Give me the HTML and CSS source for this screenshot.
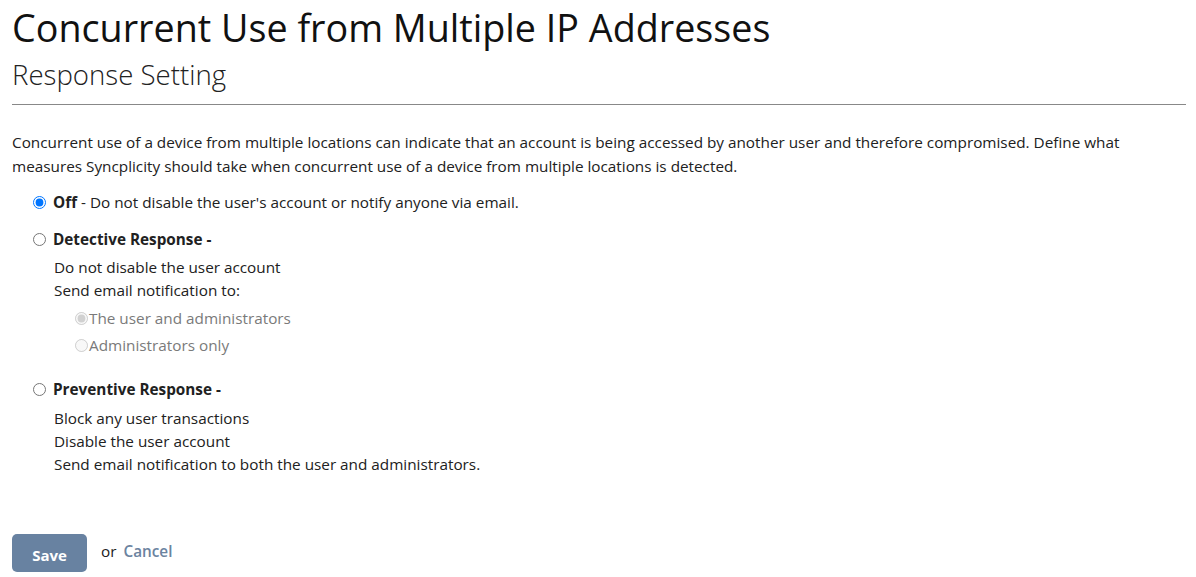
FILE: index.html
```html
<!DOCTYPE html>
<html><head>
<meta charset="utf-8">
<title>Concurrent Use from Multiple IP Addresses</title>
<link rel="stylesheet" href="styles.css">
</head>
<body>
<div class="page">
	<h1>Concurrent Use from Multiple IP Addresses</h1>
	<h2>Response Setting</h2>
	<hr>
	<p class="intro">Concurrent use of a device from multiple locations can indicate that an account is being accessed by another user and therefore compromised. Define what measures Syncplicity should take when concurrent use of a device from multiple locations is detected.</p>

	<div class="options">
		<label class="opt">
			<input type="radio" name="response" value="off" checked>
			<span><b>Off</b> - Do not disable the user's account or notify anyone via email.</span>
		</label>

		<label class="opt">
			<input type="radio" name="response" value="detective">
			<span><b>Detective Response -</b></span>
		</label>
		<div class="details">
			<div>Do not disable the user account</div>
			<div>Send email notification to:</div>
			<div class="sub">
				<label class="subopt"><input type="radio" name="notify" checked disabled>The user and administrators</label>
				<label class="subopt"><input type="radio" name="notify" disabled>Administrators only</label>
			</div>
		</div>

		<label class="opt">
			<input type="radio" name="response" value="preventive">
			<span><b>Preventive Response -</b></span>
		</label>
		<div class="details">
			<div>Block any user transactions</div>
			<div>Disable the user account</div>
			<div>Send email notification to both the user and administrators.</div>
		</div>
	</div>

	<div class="actions">
		<button class="save">Save</button>
		<span class="or">or</span>
		<a href="#" class="cancel">Cancel</a>
	</div>
</div>
</body>
</html>
```

FILE: styles.css
```css
body {
	margin: 0;
	font-family: "Open Sans", Arial, sans-serif;
	font-size: 15.3px;
	color: #212121;
	background: #fff;
}
.page {
	padding: 0 10px 0 12px;
}
h1 {
	margin: 0;
	padding-top: 5px;
	font-size: 37.7px;
	font-weight: 400;
	line-height: 46px;
	color: #111;
}
h2 {
	margin: 5px 0 0;
	font-size: 27.6px;
	font-weight: 300;
	line-height: 36px;
	color: #222;
}
hr {
	margin: 12px 0 0;
	border: 0;
	border-top: 1px solid #888;
}
.intro {
	margin: 25px 0 0;
	line-height: 24px;
}
.options {
	margin-top: 12px;
	padding-left: 21px;
}
.opt {
	display: flex;
	align-items: center;
	height: 24px;
	margin-bottom: 13px;
}
.opt input {
	margin: 0 7px 0 0;
	width: 13px;
	height: 13px;
}
.details {
	padding-left: 21px;
	margin-top: -8px;
	margin-bottom: 18px;
	line-height: 23px;
}
.details:last-child {
	margin-top: -7px;
}
.sub {
	padding-left: 21px;
	margin-top: 3px;
	color: #7a7a7a;
}
.subopt {
	display: flex;
	align-items: center;
	height: 27px;
}
.subopt input {
	margin: 0 1px 0 0;
	width: 13px;
	height: 13px;
}
.actions {
	margin-top: 58px;
	display: flex;
	align-items: center;
}
.save {
	width: 75px;
	height: 38px;
	border: 0;
	border-radius: 5px;
	background: #6882a1;
	color: #fff;
	font-family: inherit;
	font-size: 15px;
	font-weight: 700;
	padding-top: 4px;
}
.or {
	margin-left: 14px;
	margin-right: 7px;
	margin-top: -4px;
}
.cancel {
	color: #6b83a0;
	font-weight: 600;
	text-decoration: none;
	margin-top: -4px;
}
```
